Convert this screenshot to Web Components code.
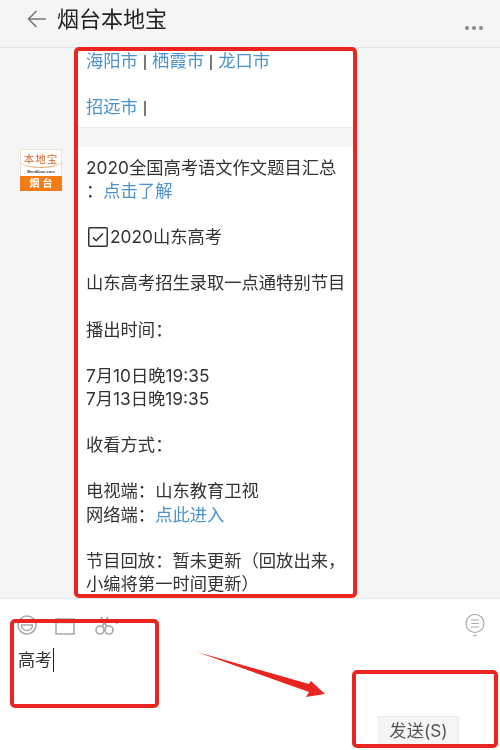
<!DOCTYPE html>
<html lang="zh">
<head>
<meta charset="utf-8">
<title>烟台本地宝</title>
<style>
  html, body { margin: 0; height: 100%; background: #f5f5f5; }
  body { font-family: Inter, "Noto Sans CJK SC", "Liberation Sans", sans-serif; color: #333; overflow: hidden; }
  chat-window { filter: blur(0.35px); }
</style>
</head>
<body>
<chat-window>
  <chat-header slot="header" title="烟台本地宝"></chat-header>
  <chat-message slot="messages">
    <msg-line style="margin-top:.5px"><a-link>海阳市</a-link> <msg-pipe>|</msg-pipe> <a-link>栖霞市</a-link> <msg-pipe>|</msg-pipe> <a-link>龙口市</a-link></msg-line>
    <msg-line gap="23"><a-link>招远市</a-link> <msg-pipe>|</msg-pipe></msg-line>
    <msg-divider></msg-divider>
    <msg-line>2020全国高考语文作文题目汇总</msg-line>
    <msg-line>：<a-link>点击了解</a-link></msg-line>
    <msg-line gap="23"><check-icon></check-icon>2020山东高考</msg-line>
    <msg-line gap="23">山东高考招生录取一点通特别节目</msg-line>
    <msg-line gap="24">播出时间：</msg-line>
    <msg-line gap="23">7月10日晚19:35</msg-line>
    <msg-line>7月13日晚19:35</msg-line>
    <msg-line gap="23">收看方式：</msg-line>
    <msg-line gap="23">电视端：山东教育卫视</msg-line>
    <msg-line>网络端：<a-link>点此进入</a-link></msg-line>
    <msg-line gap="23">节目回放：暂未更新（回放出来，</msg-line>
    <msg-line>小编将第一时间更新）</msg-line>
  </chat-message>
  <chat-composer slot="composer" draft="高考" action="发送(S)"></chat-composer>
  <red-frame slot="marks" style="left:74px;top:47px;width:283px;height:551px"></red-frame>
  <red-frame slot="marks" style="left:10px;top:619px;width:149px;height:89px"></red-frame>
  <red-frame slot="marks" style="left:352px;top:670px;width:146px;height:78px"></red-frame>
  <red-arrow slot="marks"></red-arrow>
</chat-window>

<script>
// Page shell: header, message area, composer, and the red marks on top
class ChatWindow extends HTMLElement {
  constructor() {
    super();
    this.attachShadow({ mode: 'open' });
    this.shadowRoot.innerHTML = `
      <style>
        :host { display: flex; flex-direction: column; position: relative; width: 500px; height: 750px; overflow: hidden; }
        .messages { flex: 1; min-height: 0; display: flex; gap: 16px; padding-left: 20px; }
        .avatar { margin-top: 101px; }
      </style>
      <slot name="header"></slot>
      <div class="messages">
        <bao-logo class="avatar"></bao-logo>
        <slot name="messages"></slot>
      </div>
      <slot name="composer"></slot>
      <slot name="marks"></slot>
    `;
  }
}

class ChatHeader extends HTMLElement {
  constructor() {
    super();
    this.attachShadow({ mode: 'open' });
    this.shadowRoot.innerHTML = `
      <style>
        :host { display: flex; align-items: center; height: 47px; padding: 0 17px 0 27px; background: #f5f5f5; border-bottom: 1px solid #e4e4e4; }
        svg { display: block; flex: none; }
        .title { flex: 1; margin: -10px 0 0 11px; font-size: 22px; line-height: 30px; color: #222; }
        .more { display: flex; gap: 3px; margin-top: 8px; }
        .more i { width: 4px; height: 4px; border-radius: 50%; background: #8a8a8a; }
      </style>
      <svg width="19" height="18" viewBox="0 0 19 18" style="margin-top:-10px" fill="none" stroke="#777" stroke-width="1.6">
        <path d="M9.500 1 1.500 9l8 8M1.500 9H19"/>
      </svg>
      <div class="title"></div>
      <div class="more"><i></i><i></i><i></i></div>
    `;
    this.shadowRoot.querySelector('.title').textContent = this.getAttribute('title');
    this.removeAttribute('title');
  }
}

// Orange account logo
class BaoLogo extends HTMLElement {
  constructor() {
    super();
    this.attachShadow({ mode: 'open' });
    this.shadowRoot.innerHTML = `
      <style>
        :host { display: flex; flex-direction: column; flex: none; width: 42px; height: 42px; background: #fff; box-shadow: inset 0 0 0 1px #f0e2d2; text-align: center; }
        .name { height: 14px; margin-top: 5px; font-size: 10.500px; line-height: 12px; color: #c9682a; border-bottom: 1px solid #e9a56c; border-radius: 0 0 50% 50%; letter-spacing: 1px; }
        .site { height: 6px; margin-top: 1px; font: 700 4px/6px "Liberation Sans", sans-serif; color: #444; }
        .city { margin-top: 1px; height: 15px; background: #f57c14; color: #fff; font-size: 10px; line-height: 15px; font-weight: 700; letter-spacing: 3px; text-indent: 3px; }
      </style>
      <div class="name">本地宝</div>
      <div class="site">Bendibao.com</div>
      <div class="city">烟台</div>
    `;
  }
}

class ChatMessage extends HTMLElement {
  constructor() {
    super();
    this.attachShadow({ mode: 'open' });
    this.shadowRoot.innerHTML = `
      <style>
        :host { display: block; width: 275px; height: 100%; overflow: hidden; background: #fff; }
      </style>
      <slot></slot>
    `;
  }
}

// One line of message text; gap is the empty space above it
class MsgLine extends HTMLElement {
  constructor() {
    super();
    this.attachShadow({ mode: 'open' });
    this.shadowRoot.innerHTML = `
      <style>
        :host { display: block; padding-left: 8px; font-size: 17.3px; line-height: 23.1px; height: 23.1px; white-space: nowrap; color: #333; }
      </style>
      <slot></slot>
    `;
  }
  connectedCallback() {
    const gap = this.getAttribute('gap');
    if (gap) this.style.marginTop = gap + 'px';
  }
}

class MsgDivider extends HTMLElement {
  constructor() {
    super();
    this.attachShadow({ mode: 'open' });
    this.shadowRoot.innerHTML = `
      <style>
        :host { display: block; height: 19px; margin: 9px 0 9px; background: #f6f6f6; border-top: 1px solid #ececec; }
      </style>
    `;
  }
}

// Inline hosts: no whitespace around the slot, it would render as a space
class ALink extends HTMLElement {
  constructor() {
    super();
    this.attachShadow({ mode: 'open' });
    this.shadowRoot.innerHTML = `<style>:host { display: inline; color: #4b92cf; }</style><slot></slot>`;
  }
}

class MsgPipe extends HTMLElement {
  constructor() {
    super();
    this.attachShadow({ mode: 'open' });
    this.shadowRoot.innerHTML = `<style>:host { display: inline; font-family: "Liberation Sans", sans-serif; color: #444; }</style><slot></slot>`;
  }
}

class CheckIcon extends HTMLElement {
  constructor() {
    super();
    this.attachShadow({ mode: 'open' });
    this.shadowRoot.innerHTML = `
      <style>
        :host { display: inline-block; width: 24px; height: 20px; vertical-align: -4px; }
        svg { display: block; margin-left: 2px; }
      </style>
      <svg width="20" height="20" viewBox="0 0 20 20" fill="none" stroke="#333">
        <rect x=".75" y=".75" width="18.5" height="18.5" rx="1" stroke-width="1.5"/>
        <path d="M5 10.500l3.200 3.200L15 6.500" stroke-width="1.600"/>
      </svg>
    `;
  }
}

class ChatComposer extends HTMLElement {
  constructor() {
    super();
    this.attachShadow({ mode: 'open' });
    this.shadowRoot.innerHTML = `
      <style>
        :host { display: flex; flex-direction: column; flex: none; height: 151px; background: #fff; border-top: 1px solid #e8e8e8; }
        .tools { display: flex; align-items: flex-start; gap: 20px; height: 39px; padding: 16px 15px 0 17px; box-sizing: border-box; }
        .tools svg { display: block; }
        .end { margin-left: auto; }
        .draft { flex: 1; padding: 10px 18px 0; font-size: 17px; line-height: 25px; color: #333; }
        .draft span { display: inline-block; height: 24px; border-right: 1px solid #222; padding-right: 1px; }
        .foot { display: flex; justify-content: flex-end; padding: 0 41px 4px 0; }
        button { width: 81px; height: 30px; padding: 0 0 2px; box-sizing: border-box; border: 1px solid #ececec; border-bottom: 0; background: #f5f5f5; color: #555; font: inherit; font-size: 17.3px; line-height: 24px; }
      </style>
      <div class="tools">
        <svg width="20" height="20" viewBox="0 0 20 20" fill="none" stroke="#a8a8a8" stroke-width="1.500">
          <circle cx="10" cy="10" r="9"/><path d="M4.500 10h11c0 3.500-2.500 5.500-5.500 5.500S4.500 13.500 4.500 10zM6 7h2M12 7h2"/>
        </svg>
        <svg width="20" height="17" viewBox="0 0 20 17" fill="none" stroke="#a8a8a8" stroke-width="1.500" style="margin-top:3px;margin-left:-2px">
          <path d="M1 1h18v15H1zM1 4.500h18"/>
        </svg>
        <svg width="24" height="20" viewBox="0 0 24 20" fill="none" stroke="#a8a8a8" stroke-width="1.600" style="margin-top:1px">
          <circle cx="5" cy="14" r="4"/><circle cx="14" cy="14" r="4"/><path d="M7 10.500 13 1M12 10.500 6 1"/><path d="M21 7.500h1.500" stroke-width="1"/>
        </svg>
        <svg class="end" width="20" height="24" viewBox="0 0 20 24" fill="none" stroke="#a8a8a8" stroke-width="1.200" style="margin-top:-1px">
          <circle cx="10" cy="9.500" r="9"/><path d="M6 6h8M6 9.500h8M6 13h8"/><path d="M8.500 21.500h3" stroke-width="1.500"/>
        </svg>
      </div>
      <div class="draft"><span></span></div>
      <div class="foot"><button></button></div>
    `;
    this.shadowRoot.querySelector('.draft span').textContent = this.getAttribute('draft');
    this.shadowRoot.querySelector('button').textContent = this.getAttribute('action');
  }
}

// Red annotation box drawn over the screenshot
class RedFrame extends HTMLElement {
  constructor() {
    super();
    this.attachShadow({ mode: 'open' });
    this.shadowRoot.innerHTML = `
      <style>
        :host { position: absolute; box-sizing: border-box; border: 4px solid #e8261f; border-radius: 5px; pointer-events: none; }
      </style>
    `;
  }
}

class RedArrow extends HTMLElement {
  constructor() {
    super();
    this.attachShadow({ mode: 'open' });
    this.shadowRoot.innerHTML = `
      <style>
        :host { position: absolute; left: 190px; top: 645px; width: 140px; height: 60px; pointer-events: none; }
        svg { display: block; }
      </style>
      <svg width="140" height="60" viewBox="0 0 140 60">
        <polygon points="7,7 119,39 121,36 135,49 116,52 119,47" fill="#e8261f"/>
      </svg>
    `;
  }
}

customElements.define('chat-window', ChatWindow);
customElements.define('chat-header', ChatHeader);
customElements.define('bao-logo', BaoLogo);
customElements.define('chat-message', ChatMessage);
customElements.define('msg-line', MsgLine);
customElements.define('msg-divider', MsgDivider);
customElements.define('a-link', ALink);
customElements.define('msg-pipe', MsgPipe);
customElements.define('check-icon', CheckIcon);
customElements.define('chat-composer', ChatComposer);
customElements.define('red-frame', RedFrame);
customElements.define('red-arrow', RedArrow);
</script>
</body>
</html>
